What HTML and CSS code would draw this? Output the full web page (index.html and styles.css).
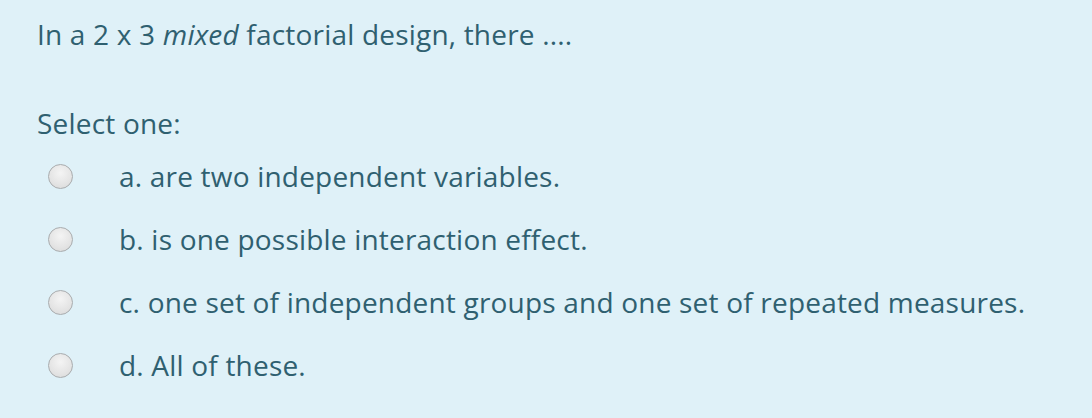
FILE: index.html
```html
<!DOCTYPE html>
<html>
<head>
<meta charset="utf-8">
<link rel="stylesheet" href="styles.css">
</head>
<body>
<div class="formulation">
  <div class="qtext">In a 2 x 3 <em>mixed</em> factorial design, there ....</div>
  <div class="prompt">Select one:</div>
  <div class="answers">
    <label class="option"><span class="radio"></span><span class="label">a. are two independent variables.</span></label>
    <label class="option"><span class="radio"></span><span class="label">b. is one possible interaction effect.</span></label>
    <label class="option"><span class="radio"></span><span class="label">c. one set of independent groups and one set of repeated measures.</span></label>
    <label class="option"><span class="radio"></span><span class="label">d. All of these.</span></label>
  </div>
</div>
</body>
</html>
```

FILE: styles.css
```css
html, body {
  margin: 0;
  padding: 0;
  background: #dff1f8;
}
body {
  width: 1092px;
  height: 418px;
  overflow: hidden;
}
.formulation {
  padding: 16px 0 0 37px;
  color: #2f6070;
  font-family: "Open Sans", "Noto Sans", sans-serif;
  font-size: 28px;
  letter-spacing: 0.2px;
  line-height: 36px;
}
.qtext em {
  font-style: italic;
}
.prompt {
  margin-top: 53px;
}
.answers {
  display: flex;
  flex-direction: column;
  gap: 27px;
  margin-top: 17px;
}
.option {
  display: flex;
  align-items: center;
  height: 36px;
}
.radio {
  box-sizing: border-box;
  width: 25px;
  height: 25px;
  border-radius: 50%;
  border: 1px solid #a9acae;
  background: radial-gradient(circle at 50% 35%, #f4f4f4 0%, #e4e4e4 60%, #d8d8d8 100%);
  margin-left: 11px;
  margin-right: 46px;
  flex: none;
}
```
